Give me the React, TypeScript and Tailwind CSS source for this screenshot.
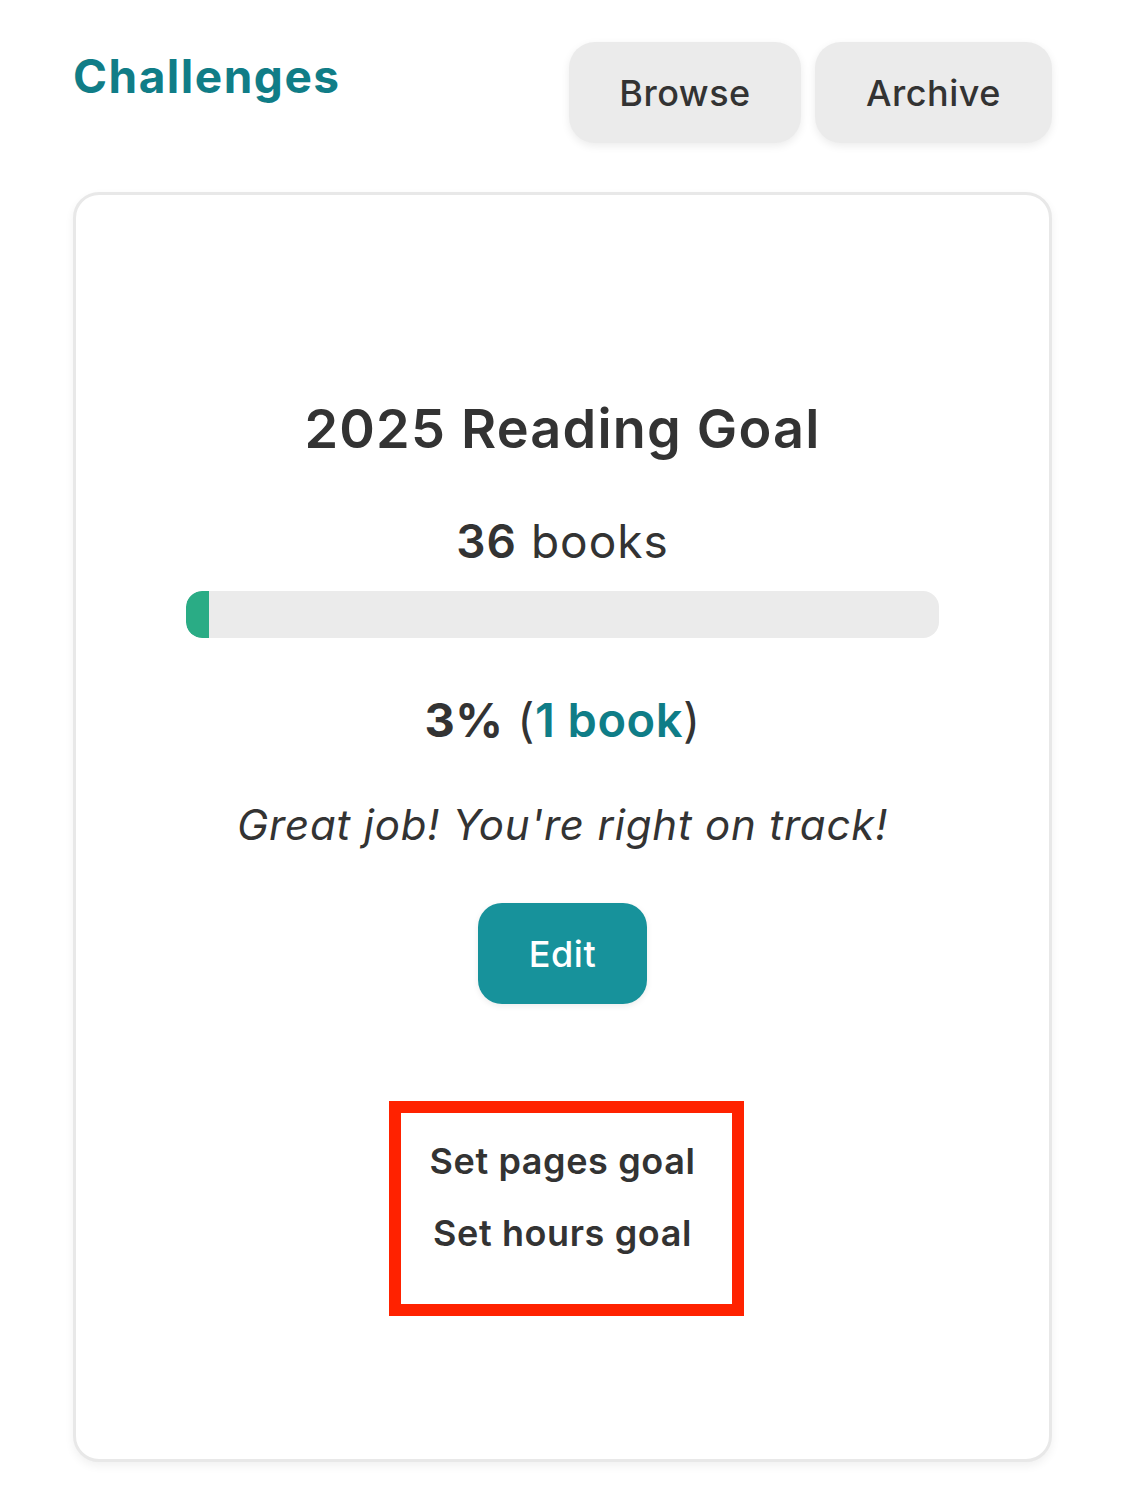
import React from 'react';

const FONT = "font-['Inter',_'Open_Sans',_sans-serif]";

function HeaderButton({ label, width }: { label: string; width: string }) {
  return (
    <button
      className={`${width} h-[101px] rounded-[26px] bg-[#ebebeb] text-[36px] font-medium tracking-[0.5px] text-[#333] shadow-[0_3px_8px_rgba(0,0,0,0.08)]`}
    >
      {label}
    </button>
  );
}

function GoalCard() {
  return (
    <div className="mt-[49px] h-[1270px] rounded-[26px] border-[3px] border-[#e8e8e8] bg-white shadow-[0_4px_10px_rgba(0,0,0,0.06)] flex flex-col items-center pt-[198px]">
      <h2 className="text-[54px] font-semibold leading-[72px] text-[#333] tracking-[1.2px]">2025 Reading Goal</h2>

      <p className="mt-[46px] text-[46px] leading-[60px] tracking-[1px] text-[#333]">
        <span className="font-semibold">36</span> books
      </p>

      <div className="mt-[20px] w-[753px] h-[47px] rounded-[16px] bg-[#ebebeb] overflow-hidden">
        <div className="h-full rounded-l-[16px] bg-[#2aac85]" style={{ width: '23px' }} />
      </div>

      <p className="mt-[50px] text-[47px] leading-[64px] tracking-[0.5px] text-[#333]">
        <span className="font-bold">3%</span> (<span className="font-semibold text-[#0f7d87]">1 book</span>)
      </p>

      <p className="mt-[45px] text-[42px] leading-[56px] italic tracking-[0.8px] text-[#333]">Great job! You're right on track!</p>

      <button className="mt-[50px] w-[169px] h-[101px] rounded-[24px] bg-[#17929b] text-white text-[36px] font-medium tracking-[0.5px] shadow-[0_2px_6px_rgba(0,0,0,0.08)]">
        Edit
      </button>

      <div className="mt-[97px] ml-[8px] w-[355px] h-[215px] border-[12px] border-[#ff2200] flex flex-col items-center pt-[24px] gap-[24px]">
        <span className="-ml-[8px] text-[36px] font-semibold leading-[48px] tracking-[0.6px] text-[#333]">Set pages goal</span>
        <span className="-ml-[8px] text-[36px] font-semibold leading-[48px] tracking-[0.6px] text-[#333]">Set hours goal</span>
      </div>
    </div>
  );
}

export default function App() {
  return (
    <div className={`${FONT} min-h-[1505px] bg-white px-[73px]`}>
      <div className="flex items-start justify-between pt-[42px]">
        <h1 className="mt-[4px] text-[46px] font-bold leading-[60px] tracking-[1.5px] text-[#107d87]">Challenges</h1>
        <div className="flex gap-[14px]">
          <HeaderButton label="Browse" width="w-[232px]" />
          <HeaderButton label="Archive" width="w-[237px]" />
        </div>
      </div>
      <GoalCard />
    </div>
  );
}
